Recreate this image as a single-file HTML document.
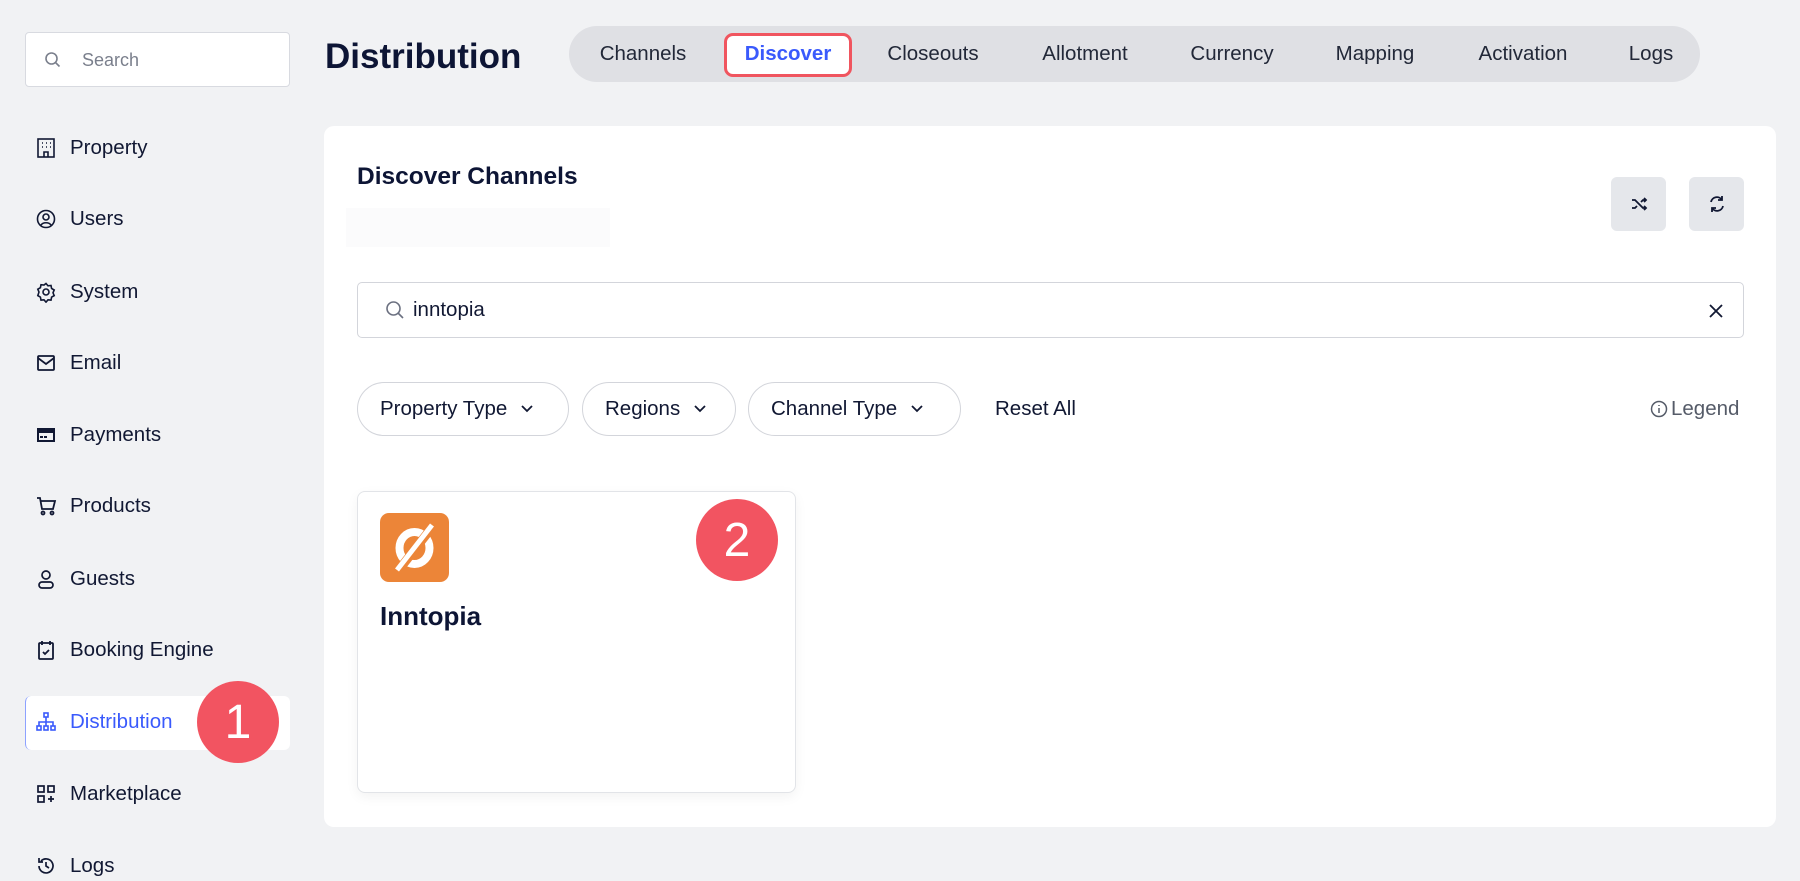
<!DOCTYPE html>
<html><head><meta charset="utf-8"><style>
*{box-sizing:border-box;margin:0;padding:0}
body{width:1800px;height:864px;background:#f1f2f4;font-family:"Liberation Sans",sans-serif;color:#111833;position:relative;overflow:hidden}
.abs{position:absolute}
.search{left:25px;top:32px;width:265px;height:55px;background:#fff;border:1px solid #d8dae0;border-radius:4px}
.search span{position:absolute;left:56px;top:17px;font-size:18px;color:#7a7f8c}
.item{position:absolute;left:35px;height:30px;display:flex;align-items:center;font-size:20.5px;font-weight:500;color:#111833}
.item svg{width:22px;height:22px;margin-right:13px}
.active{left:25px;top:696px;width:265px;height:54px;background:#fff;border-left:1px solid #8da2ff;border-radius:6px}
.badge{border-radius:50%;background:#f25461;color:#fff;font-size:48px;display:flex;align-items:center;justify-content:center;width:82px;height:82px}
h1{position:absolute;left:325px;top:37px;font-size:35px;font-weight:700;color:#0d1535}
.tabs{left:569px;top:26px;width:1131px;height:56px;background:#dfe0e4;border-radius:28px}
.tab{position:absolute;top:0;height:56px;line-height:56px;font-size:20.5px;color:#222838;transform:translateX(-50%)}
.disc{left:724px;top:33px;width:128px;height:44px;border:3px solid #f0555f;border-radius:9px;background:#fff}
.panel{left:324px;top:126px;width:1452px;height:701px;background:#fff;border-radius:10px}
.btn{width:55px;height:54px;background:#e5e7eb;border-radius:6px;display:flex;align-items:center;justify-content:center}
.input{left:357px;top:282px;width:1387px;height:56px;border:1px solid #d3d5db;border-radius:5px;background:#fff}
.pill{top:382px;height:54px;border:1px solid #d3d5db;border-radius:27px;background:#fff;font-size:20.5px;font-weight:500;display:flex;align-items:center;padding-left:22px}
.pill svg{margin-left:14px}
.card{left:357px;top:491px;width:439px;height:302px;border:1px solid #e2e4e8;border-radius:8px;background:#fff;box-shadow:0 4px 12px rgba(0,0,0,.05)}
</style></head><body>
<div class="abs search"><svg class="abs" style="left:18px;top:18px" width="18" height="18" viewBox="0 0 18 18" fill="none" stroke="#7a7f8c" stroke-width="1.6"><circle cx="7.5" cy="7.5" r="5.5"/><path d="M11.5 11.5l4 4"/></svg><span>Search</span></div>

<div class="abs active"></div>
<div class="item" style="top:133px"><svg viewBox="0 0 22 22" fill="none" stroke="#111833" stroke-width="1.6"><rect x="3" y="2" width="16" height="18"/><path d="M7 6h1M11 6h1M15 6h1M7 10h1M11 10h1M15 10h1M9 20v-5h4v5"/></svg>Property</div>
<div class="item" style="top:204px"><svg viewBox="0 0 22 22" fill="none" stroke="#111833" stroke-width="1.6"><circle cx="11" cy="11" r="8.5"/><circle cx="11" cy="9" r="3"/><path d="M6 17c2-3 8-3 10 0"/></svg>Users</div>
<div class="item" style="top:277px"><svg viewBox="0 0 22 22" fill="none" stroke="#111833" stroke-width="1.6"><circle cx="11" cy="11" r="3"/><path d="M11 2.5l2 2.3 3-.3.6 3 2.6 1.5-1.2 2.8 1.2 2.8-2.6 1.5-.6 3-3-.3-2 2.3-2-2.3-3 .3-.6-3-2.6-1.5L4 11 2.8 8.2 5.4 6.7l.6-3 3 .3z"/></svg>System</div>
<div class="item" style="top:348px"><svg viewBox="0 0 22 22" fill="none" stroke="#111833" stroke-width="1.8"><rect x="3" y="4" width="16" height="14" rx="1"/><path d="M3 6l8 6 8-6"/></svg>Email</div>
<div class="item" style="top:420px"><svg viewBox="0 0 22 22" fill="#111833"><path d="M2 4h18v14H2z M4 9v7h14V9z M5 12h3v2H5z M9 12h3v2H9z"/></svg>Payments</div>
<div class="item" style="top:491px"><svg viewBox="0 0 22 22" fill="none" stroke="#111833" stroke-width="1.8"><path d="M2 3h3l2 11h11l2-8H6"/><circle cx="8" cy="18" r="1.5"/><circle cx="17" cy="18" r="1.5"/></svg>Products</div>
<div class="item" style="top:564px"><svg viewBox="0 0 22 22" fill="none" stroke="#111833" stroke-width="1.7"><circle cx="11" cy="7" r="4"/><rect x="4" y="14" width="14" height="6" rx="3"/></svg>Guests</div>
<div class="item" style="top:635px"><svg viewBox="0 0 22 22" fill="none" stroke="#111833" stroke-width="1.8"><rect x="4" y="4" width="14" height="16" rx="1"/><path d="M7 2v4M15 2v4M8 13l2 2 4-4"/></svg>Booking Engine</div>
<div class="item" style="top:707px;color:#3a5afc"><svg viewBox="0 0 22 22" fill="none" stroke="#3a5afc" stroke-width="1.6"><rect x="9" y="2" width="4" height="4"/><rect x="2" y="15" width="4" height="4"/><rect x="9" y="15" width="4" height="4"/><rect x="16" y="15" width="4" height="4"/><path d="M11 6v9M4 15v-4h14v4"/></svg>Distribution</div>
<div class="item" style="top:779px"><svg viewBox="0 0 22 22" fill="none" stroke="#111833" stroke-width="1.7"><rect x="3" y="3" width="6" height="6"/><rect x="13" y="3" width="6" height="6"/><rect x="3" y="13" width="6" height="6"/><path d="M16 13v6M13 16h6"/></svg>Marketplace</div>
<div class="item" style="top:851px"><svg viewBox="0 0 22 22" fill="none" stroke="#111833" stroke-width="1.7"><path d="M4 11a7 7 0 1 0 2-5M4 3v4h4M11 7v4l3 2"/></svg>Logs</div>
<div class="abs badge" style="left:197px;top:681px">1</div>

<h1>Distribution</h1>
<div class="abs tabs"></div>
<div class="abs disc"></div>
<div class="tab" style="left:643px;top:26px">Channels</div>
<div class="tab" style="left:788px;top:26px;color:#3a5afc;font-weight:700">Discover</div>
<div class="tab" style="left:933px;top:26px">Closeouts</div>
<div class="tab" style="left:1085px;top:26px">Allotment</div>
<div class="tab" style="left:1232px;top:26px">Currency</div>
<div class="tab" style="left:1375px;top:26px">Mapping</div>
<div class="tab" style="left:1523px;top:26px">Activation</div>
<div class="tab" style="left:1651px;top:26px">Logs</div>

<div class="abs panel"></div>
<div class="abs" style="left:357px;top:163px;font-size:24.5px;font-weight:700;color:#0d1535">Discover Channels</div>
<div class="abs" style="left:346px;top:208px;width:264px;height:39px;background:#fbfbfc"></div>
<div class="abs btn" style="left:1611px;top:177px"><svg width="20" height="20" viewBox="0 0 20 20" fill="none" stroke="#111833" stroke-width="1.8"><path d="M3 6h3l8 8h3M3 14h3l2-2M12 8l2-2h3M15 4l2 2-2 2M15 12l2 2-2 2"/></svg></div>
<div class="abs btn" style="left:1689px;top:177px"><svg width="20" height="20" viewBox="0 0 20 20" fill="none" stroke="#111833" stroke-width="1.8"><path d="M4 8a6 6 0 0 1 11-2M16 12a6 6 0 0 1-11 2M15 2v4h-4M5 18v-4h4"/></svg></div>

<div class="abs input"><svg class="abs" style="left:27px;top:17px" width="20" height="20" viewBox="0 0 20 20" fill="none" stroke="#6b7080" stroke-width="1.6"><circle cx="8.5" cy="8.5" r="6.5"/><path d="M13 13l5 5"/></svg><span class="abs" style="left:55px;top:15px;font-size:20.5px">inntopia</span><svg class="abs" style="left:1350px;top:20px" width="16" height="16" viewBox="0 0 16 16" stroke="#111833" stroke-width="1.8"><path d="M2 2l12 12M14 2L2 14"/></svg></div>

<div class="abs pill" style="left:357px;width:212px">Property Type<svg width="12" height="8" viewBox="0 0 12 8" fill="none" stroke="#111833" stroke-width="1.8"><path d="M1 1l5 5 5-5"/></svg></div>
<div class="abs pill" style="left:582px;width:154px">Regions<svg width="12" height="8" viewBox="0 0 12 8" fill="none" stroke="#111833" stroke-width="1.8"><path d="M1 1l5 5 5-5"/></svg></div>
<div class="abs pill" style="left:748px;width:213px">Channel Type<svg width="12" height="8" viewBox="0 0 12 8" fill="none" stroke="#111833" stroke-width="1.8"><path d="M1 1l5 5 5-5"/></svg></div>
<div class="abs" style="left:995px;top:397px;font-size:20.5px;font-weight:500">Reset All</div>
<div class="abs" style="left:1650px;top:397px;font-size:20.5px;color:#555b68;display:flex;align-items:center"><svg width="18" height="18" viewBox="0 0 18 18" fill="none" stroke="#555b68" stroke-width="1.5" style="margin-right:3px"><circle cx="9" cy="9" r="7.5"/><path d="M9 8v5M9 5v1"/></svg>Legend</div>

<div class="abs card"></div>
<div class="abs" style="left:380px;top:513px;width:69px;height:69px;background:#ec8538;border-radius:9px"><svg width="69" height="69" viewBox="0 0 69 69" fill="none" stroke="#fff"><ellipse cx="34.5" cy="35" rx="15" ry="16" stroke-width="8"/><path d="M53 13L18 58" stroke="#ec8538" stroke-width="9"/><path d="M52 12L17 57" stroke-width="5"/></svg></div>
<div class="abs" style="left:380px;top:601px;font-size:26px;font-weight:700;color:#0d1535">Inntopia</div>
<div class="abs badge" style="left:696px;top:499px">2</div>
</body></html>
